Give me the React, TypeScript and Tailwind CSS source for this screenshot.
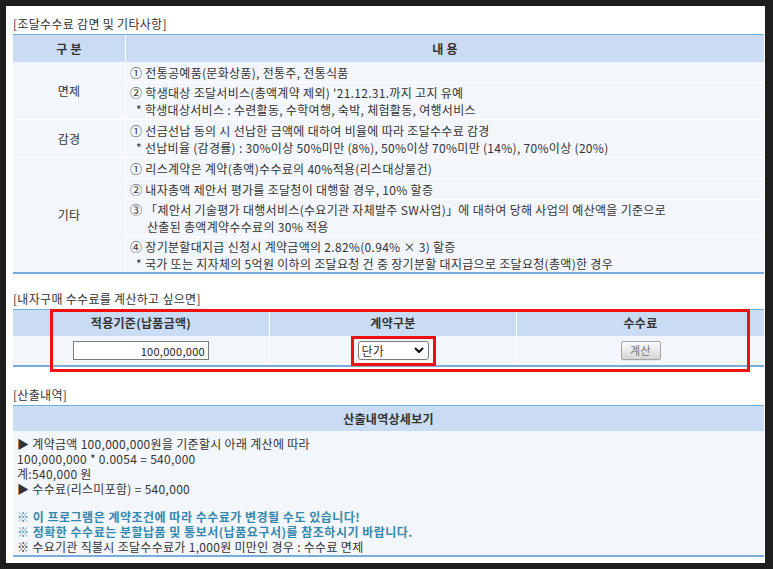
import React from "react";

type Line = { text: string; indent?: "sub" | "wrap" };
type Row = { h: string; lines: Line[] };

const groups: { label: string; rows: Row[] }[] = [
  {
    label: "면제",
    rows: [
      { h: "h-[21px] border-b border-white", lines: [{ text: "① 전통공예품(문화상품), 전통주, 전통식품" }] },
      {
        h: "h-[36px]",
        lines: [
          { text: "② 학생대상 조달서비스(총액계약 제외) '21.12.31.까지 고지 유예" },
          { text: "* 학생대상서비스 : 수련활동, 수학여행, 숙박, 체험활동, 여행서비스", indent: "sub" },
        ],
      },
    ],
  },
  {
    label: "감경",
    rows: [
      {
        h: "h-[37px]",
        lines: [
          { text: "① 선금선납 동의 시 선납한 금액에 대하여 비율에 따라 조달수수료 감경" },
          { text: "* 선납비율 (감경률) : 30%이상 50%미만 (8%), 50%이상 70%미만 (14%), 70%이상 (20%)", indent: "sub" },
        ],
      },
    ],
  },
  {
    label: "기타",
    rows: [
      { h: "h-[21px] border-b border-white", lines: [{ text: "① 리스계약은 계약(총액)수수료의 40%적용(리스대상물건)" }] },
      { h: "h-[21px] border-b border-white", lines: [{ text: "② 내자총액 제안서 평가를 조달청이 대행할 경우, 10% 할증" }] },
      {
        h: "h-[37px] border-b border-white",
        lines: [
          { text: "③ 「제안서 기술평가 대행서비스(수요기관 자체발주 SW사업)」에 대하여 당해 사업의 예산액을 기준으로" },
          { text: "산출된 총액계약수수료의 30% 적용", indent: "wrap" },
        ],
      },
      {
        h: "h-[35px]",
        lines: [
          { text: "④ 장기분할대지급 신청시 계약금액의 2.82%(0.94% × 3) 할증" },
          { text: "* 국가 또는 지자체의 5억원 이하의 조달요청 건 중 장기분할 대지급으로 조달요청(총액)한 경우", indent: "sub" },
        ],
      },
    ],
  },
];

function Chevron() {
  return (
    <svg width="10" height="7" viewBox="0 0 10 7" className="absolute right-[5px] top-[6px] pointer-events-none">
      <polyline points="1.5,1.5 5,5 8.5,1.5" fill="none" stroke="#111" strokeWidth="2" strokeLinecap="round" strokeLinejoin="round" />
    </svg>
  );
}

export default function App() {
  return (
    <div className="w-[773px] h-[569px] bg-[#1e1e1e] pt-[6px] pl-[6px] overflow-hidden">
      <div className="w-[759px] h-[557px] bg-white pl-[7px] pr-[1px] text-[12px] tracking-[0.3px] text-[#333] font-['Noto_Sans_CJK_KR',sans-serif]">
        {/* Section 1 */}
        <div className="pt-[8px] leading-[20px] h-[28px]">[조달수수료 감면 및 기타사항]</div>
        <div className="border-t border-b-2 border-[#78abdf]">
          <div className="flex h-[27px] bg-[#c9dcf4] font-bold">
            <div className="w-[113px] border-r border-white flex items-center justify-center">구 분</div>
            <div className="flex-1 flex items-center justify-center">내 용</div>
          </div>
          {groups.map((g, gi) => (
            <div
              key={g.label}
              className={gi < groups.length - 1 ? "flex bg-[#f3f7fc] border-b border-white" : "flex bg-[#f3f7fc]"}
            >
              <div className="w-[113px] shrink-0 border-r border-white flex items-center justify-center">{g.label}</div>
              <div className="flex-1">
                {g.rows.map((r, ri) => (
                  <div key={ri} className={`${r.h} flex flex-col justify-center pl-[4px] leading-[17px] whitespace-nowrap`}>
                    {r.lines.map((l, li) => (
                      <div
                        key={li}
                        className={l.indent === "sub" ? "pl-[6px]" : l.indent === "wrap" ? "pl-[17px]" : ""}
                      >
                        {l.text}
                      </div>
                    ))}
                  </div>
                ))}
              </div>
            </div>
          ))}
        </div>

        {/* Section 2 */}
        <div className="mt-[15px] h-[20px] leading-[20px]">[내자구매 수수료를 계산하고 싶으면]</div>
        <div className="relative">
          <div className="border-t border-b-2 border-[#78abdf]">
            <div className="grid grid-cols-[257px_247px_1fr] h-[26px] bg-[#c9dcf4] font-bold">
              <div className="border-r border-white flex items-center justify-center">적용기준(납품금액)</div>
              <div className="border-r border-white flex items-center justify-center">계약구분</div>
              <div className="flex items-center justify-center">수수료</div>
            </div>
            <div className="grid grid-cols-[257px_247px_1fr] h-[29px] bg-[#f3f7fc]">
              <div className="border-r border-white flex items-center justify-center">
                <input
                  readOnly
                  defaultValue="100,000,000"
                  className="w-[136px] h-[19px] border border-[#7a7a7a] bg-white text-right pr-[3px] text-[11px] tracking-[0.3px] text-[#222] outline-none font-['Noto_Sans_CJK_KR',sans-serif]"
                />
              </div>
              <div className="border-r border-white flex items-center justify-center">
                <div className="relative w-[71px] h-[19px]">
                  <select
                    defaultValue="단가"
                    className="appearance-none w-full h-full border border-[#7a7a7a] rounded-[3px] bg-white pl-[3px] text-[12px] leading-[17px] text-[#333] outline-none font-['Noto_Sans_CJK_KR',sans-serif]"
                  >
                    <option>단가</option>
                    <option>총액</option>
                  </select>
                  <Chevron />
                </div>
              </div>
              <div className="flex items-center justify-center">
                <button className="w-[40px] h-[19px] border border-[#a3a3a3] rounded-[2px] bg-linear-to-b from-[#fbfbfb] to-[#d6d6d6] text-[11px] text-[#777] leading-[17px] shadow-[0_1px_0_#e8e8e8] font-['Noto_Sans_CJK_KR',sans-serif]">
                  계산
                </button>
              </div>
            </div>
          </div>
          <div className="absolute left-[37px] top-0 w-[700px] h-[63px] border-[3px] border-[#f01010] pointer-events-none" />
          <div className="absolute left-[338px] top-[27px] w-[85px] h-[30px] border-[3px] border-[#f01010] pointer-events-none" />
        </div>

        {/* Section 3 */}
        <div className="mt-[18px] h-[20px] leading-[20px]">[산출내역]</div>
        <div className="border-t border-b-2 border-[#78abdf]">
          <div className="h-[25px] bg-[#c9dcf4] font-bold flex items-center justify-center">산출내역상세보기</div>
          <div className="h-[124px] bg-[#f3f7fc] pt-[5px] pl-[4px] leading-[15px] whitespace-nowrap">
            <div>▶ 계약금액 100,000,000원을 기준할시 아래 계산에 따라</div>
            <div>100,000,000 * 0.0054 = 540,000</div>
            <div>계:540,000 원</div>
            <div>▶ 수수료(리스미포함) = 540,000</div>
            <div className="h-[13px]" />
            <div className="text-[#3387ad] font-bold tracking-[0.5px]">※ 이 프로그램은 계약조건에 따라 수수료가 변경될 수도 있습니다!</div>
            <div className="text-[#3387ad] font-bold tracking-[0.5px]">※ 정확한 수수료는 분할납품 및 통보서(납품요구서)를 참조하시기 바랍니다.</div>
            <div>※ 수요기관 직불시 조달수수료가 1,000원 미만인 경우 : 수수료 면제</div>
          </div>
        </div>
      </div>
    </div>
  );
}
